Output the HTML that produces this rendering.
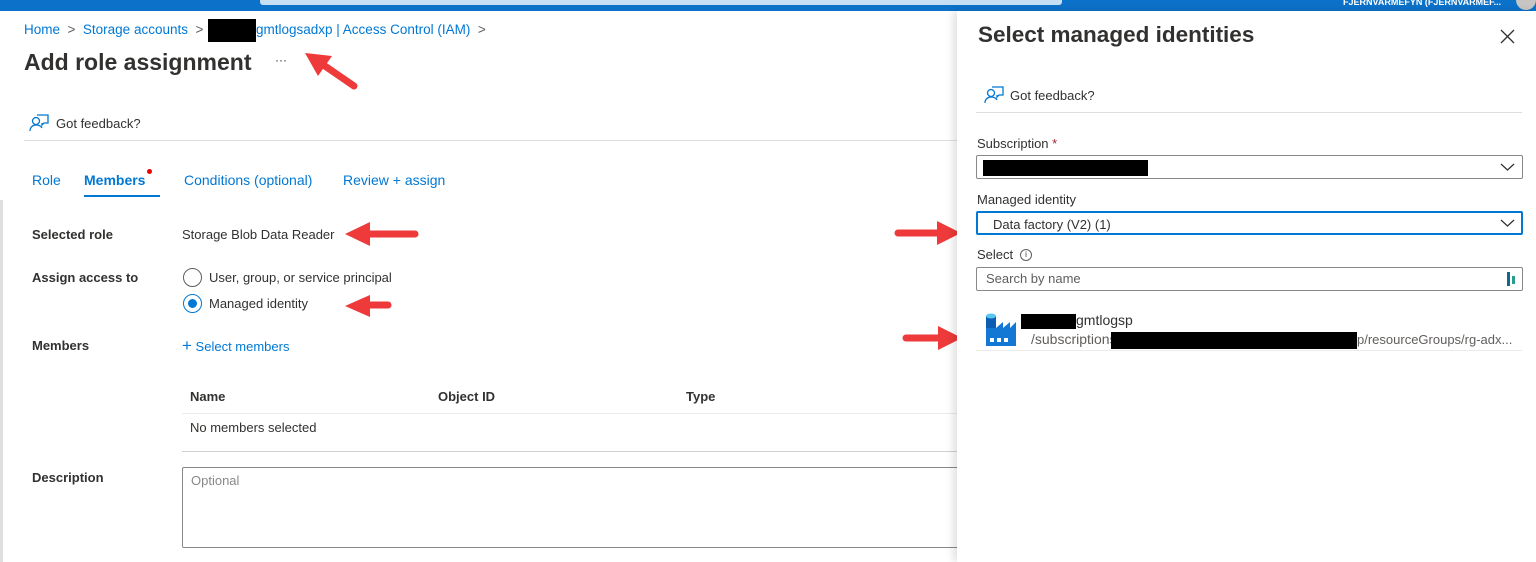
<!DOCTYPE html>
<html><head><meta charset="utf-8"><style>
*{margin:0;padding:0;box-sizing:border-box}
body{width:1536px;height:562px;overflow:hidden;background:#fff;font-family:"Liberation Sans",sans-serif;color:#323130;position:relative}
.a{position:absolute;white-space:nowrap}
.b{color:#0078d4}
.lbl{font-size:13px;font-weight:bold;color:#323130}
.t13{font-size:13px}
.line{position:absolute;height:1px;background:#e1dfdd}
.blk{position:absolute;background:#000}
</style></head><body>
<div class="a" style="left:0;top:0;width:1536px;height:11px;background:#0c71c8"></div>
<div class="a" style="left:260px;top:0;width:802px;height:5px;background:#c7dff3;border-radius:0 0 3px 3px"></div>
<div class="a" style="left:1343px;top:-3px;font-size:9px;font-weight:bold;color:#fff">FJERNVARMEFYN (FJERNVARMEF...</div>
<div class="a" style="left:1516px;top:-10px;width:20px;height:20px;border-radius:50%;background:#c8c6c4"></div>
<div class="a" style="left:0;top:200px;width:3px;height:362px;background:#e1dfdd"></div>

<div class="a b" style="left:24px;top:22px;font-size:13.5px">Home <span style="color:#605e5c">&nbsp;&gt;&nbsp;</span> Storage accounts <span style="color:#605e5c">&nbsp;&gt;&nbsp;</span></div>
<div class="blk" style="left:208px;top:19px;width:48px;height:23px"></div>
<div class="a b" style="left:256px;top:22px;font-size:13.5px">gmtlogsadxp | Access Control (IAM) <span style="color:#605e5c">&nbsp;&gt;</span></div>
<div class="a" style="left:24px;top:49px;font-size:23px;font-weight:bold;color:#323130">Add role assignment</div>
<div class="a" style="left:275px;top:53px;font-size:12px">···</div>

<svg class="a" style="left:28px;top:113px" width="22" height="20" viewBox="0 0 22 20" fill="none" stroke="#0078d4" stroke-width="1.3"><circle cx="8" cy="8" r="3.5"/><path d="M2 18c0-4 3-6 6-6s5 1 6 3"/><path d="M9 2h11v8h-4l-2 2v-2"/></svg>
<div class="a t13" style="left:56px;top:116px">Got feedback?</div>
<div class="line" style="left:24px;top:140px;width:933px"></div>

<div class="a b" style="left:32px;top:172px;font-size:14px">Role</div>
<div class="a b" style="left:84px;top:172px;font-size:14px;font-weight:bold;color:#0078d4">Members</div>
<div class="a" style="left:147px;top:169px;width:5px;height:5px;border-radius:50%;background:#e00"></div>
<div class="a" style="left:84px;top:195px;width:76px;height:2px;background:#0078d4"></div>
<div class="a b" style="left:184px;top:172px;font-size:14px">Conditions (optional)</div>
<div class="a b" style="left:343px;top:172px;font-size:14px">Review + assign</div>

<div class="a lbl" style="left:32px;top:227px">Selected role</div>
<div class="a t13" style="left:182px;top:227px">Storage Blob Data Reader</div>
<div class="a lbl" style="left:32px;top:270px">Assign access to</div>
<div class="a" style="left:183px;top:268px;width:19px;height:19px;border-radius:50%;border:1px solid #605e5c"></div>
<div class="a t13" style="left:209px;top:270px">User, group, or service principal</div>
<div class="a" style="left:183px;top:294px;width:19px;height:19px;border-radius:50%;border:1px solid #0078d4"></div>
<div class="a" style="left:188px;top:299px;width:9px;height:9px;border-radius:50%;background:#0078d4"></div>
<div class="a t13" style="left:209px;top:296px">Managed identity</div>
<div class="a lbl" style="left:32px;top:338px">Members</div>
<div class="a b t13" style="left:182px;top:336px"><span style="font-size:17px">+</span> Select members</div>

<div class="a lbl" style="left:190px;top:389px">Name</div>
<div class="a lbl" style="left:438px;top:389px">Object ID</div>
<div class="a lbl" style="left:686px;top:389px">Type</div>
<div class="line" style="left:182px;top:413px;width:775px;background:#edebe9"></div>
<div class="a t13" style="left:190px;top:420px">No members selected</div>
<div class="line" style="left:182px;top:451px;width:775px;background:#d2d0ce"></div>
<div class="a lbl" style="left:32px;top:470px">Description</div>
<div class="a" style="left:182px;top:467px;width:790px;height:81px;border:1px solid #8a8886;border-radius:2px"></div>
<div class="a t13" style="left:191px;top:473px;color:#8a8886">Optional</div>

<svg class="a" style="left:0;top:0" width="1536" height="562" fill="#ee3a3a">
<g stroke="#ee3a3a" stroke-width="7" stroke-linecap="round"><line x1="354" y1="86" x2="322" y2="64"/><line x1="415" y1="234" x2="365" y2="234"/><line x1="388" y1="305" x2="365" y2="305"/><line x1="898" y1="233" x2="940" y2="233"/><line x1="906" y1="338" x2="944" y2="338"/></g>
<polygon points="305,53 332,56 318,76"/><polygon points="345,234 370,222 370,246"/><polygon points="345,306 370,295 370,317"/><polygon points="961,233 937,221 937,245"/><polygon points="962,338 938,326 938,350"/>
</svg>

<div class="a" style="left:957px;top:11px;width:579px;height:551px;background:#fff;box-shadow:-4px 0 8px rgba(0,0,0,.12)"></div>
<div class="a" style="left:978px;top:22px;font-size:22.5px;font-weight:bold;color:#323130">Select managed identities</div>
<svg class="a" style="left:1500px;top:29px" width="15" height="15" stroke="#323130" stroke-width="1.3"><path d="M1 1L14 14M14 1L1 14"/></svg>
<svg class="a" style="left:983px;top:85px" width="22" height="20" viewBox="0 0 22 20" fill="none" stroke="#0078d4" stroke-width="1.3"><circle cx="8" cy="8" r="3.5"/><path d="M2 18c0-4 3-6 6-6s5 1 6 3"/><path d="M9 2h11v8h-4l-2 2v-2"/></svg>
<div class="a t13" style="left:1010px;top:88px">Got feedback?</div>
<div class="line" style="left:976px;top:112px;width:546px"></div>
<div class="a t13" style="left:977px;top:136px">Subscription <span style="color:#a4262c">*</span></div>
<div class="a" style="left:976px;top:155px;width:547px;height:24px;border:1px solid #8a8886;border-radius:2px"></div>
<div class="blk" style="left:983px;top:160px;width:165px;height:16px"></div>
<svg class="a" style="left:1500px;top:162px" width="15" height="10" fill="none" stroke="#323130" stroke-width="1.2"><path d="M1 2l6.5 6L14 2"/></svg>
<div class="a t13" style="left:977px;top:192px">Managed identity</div>
<div class="a" style="left:976px;top:211px;width:547px;height:24px;border:2px solid #0078d4;border-radius:2px"></div>
<div class="a t13" style="left:993px;top:217px">Data factory (V2) (1)</div>
<svg class="a" style="left:1500px;top:218px" width="15" height="10" fill="none" stroke="#323130" stroke-width="1.2"><path d="M1 2l6.5 6L14 2"/></svg>
<div class="a t13" style="left:977px;top:247px">Select</div>
<div class="a" style="left:1020px;top:249px;width:12px;height:12px;border:1px solid #605e5c;border-radius:50%;font-size:8px;text-align:center;line-height:10px">i</div>
<div class="a" style="left:976px;top:267px;width:547px;height:24px;border:1px solid #8a8886;border-radius:2px"></div>
<div class="a t13" style="left:986px;top:271px;color:#605e5c">Search by name</div>
<div class="a" style="left:1507px;top:272px;width:3px;height:14px;background:#0f6a8a"></div>
<div class="a" style="left:1512px;top:276px;width:3px;height:8px;background:#2a9d8f"></div>

<svg class="a" style="left:985px;top:312px" width="32" height="36" viewBox="0 0 32 36"><rect x="1" y="4" width="10" height="30" fill="#0a5fb4"/><ellipse cx="6" cy="4" rx="5" ry="2.5" fill="#5ac8f0"/><path d="M1 16h30v18H1z M11 16l7-6v6l7-6v6l6-6v6" fill="#1278d3"/><rect x="5" y="26" width="4" height="4" fill="#fff"/><rect x="12" y="26" width="4" height="4" fill="#fff"/><rect x="19" y="26" width="4" height="4" fill="#fff"/></svg>
<div class="blk" style="left:1021px;top:314px;width:55px;height:15px"></div>
<div class="a" style="left:1076px;top:312px;font-size:14px">gmtlogsp</div>
<div class="a" style="left:1031px;top:331px;color:#605e5c;font-size:14px">/subscriptions</div>
<div class="blk" style="left:1111px;top:332px;width:246px;height:17px"></div>
<div class="a" style="left:1357px;top:332px;color:#605e5c;font-size:13px">p/resourceGroups/rg-adx...</div>
<div class="line" style="left:976px;top:350px;width:546px;background:#edebe9"></div>
</body></html>
